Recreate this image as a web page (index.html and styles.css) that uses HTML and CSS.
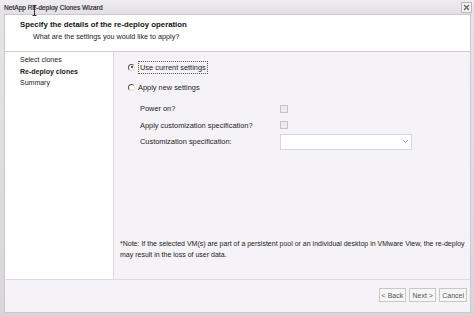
FILE: index.html
```html
<!DOCTYPE html>
<html lang="en">
<head>
    <meta charset="UTF-8">
    <title>NetApp Re-deploy Clones Wizard</title>
    <link rel="stylesheet" href="styles.css">
</head>
<body>
    <div class="window">
        <div class="titlebar">
            <span class="title">NetApp Re-deploy Clones Wizard</span>
            <span class="close">
                <svg width="7" height="7" viewBox="0 0 7 7"><path d="M1 1L6 6M6 1L1 6" stroke="#666" stroke-width="1.4"/></svg>
            </span>
            <!-- mouse pointer left over the title -->
            <svg class="ibeam" width="5" height="11" viewBox="0 0 5 11"><path d="M0.5 0.5H4.5M2.5 0.5V10.5M0.5 10.5H4.5" stroke="#333" fill="none"/></svg>
        </div>
        <div class="frame">
            <header class="header">
                <h1>Specify the details of the re-deploy operation</h1>
                <p>What are the settings you would like to apply?</p>
            </header>
            <div class="main">
                <nav class="steps">
                    <div>Select clones</div>
                    <div class="current">Re-deploy clones</div>
                    <div>Summary</div>
                </nav>
                <section class="content">
                    <label class="radio"><span class="dot checked"></span><span class="focus">Use current settings</span></label>
                    <label class="radio"><span class="dot"></span><span>Apply new settings</span></label>
                    <div class="options">
                        <div class="row"><span class="name">Power on?</span><span class="check"></span></div>
                        <div class="row"><span class="name">Apply customization specification?</span><span class="check"></span></div>
                        <div class="row"><span class="name">Customization specification:</span>
                            <span class="combo"><span class="arrow">
                                <svg width="7" height="5" viewBox="0 0 7 5"><path d="M1 1L3.5 3.5L6 1" stroke="#999" fill="none"/></svg>
                            </span></span>
                        </div>
                    </div>
                    <p class="note">*Note: If the selected VM(s) are part of a persistent pool or an individual desktop in VMware View, the re-deploy may result in the loss of user data.</p>
                </section>
            </div>
            <footer class="footer">
                <button>&lt; Back</button>
                <button>Next &gt;</button>
                <button>Cancel</button>
            </footer>
        </div>
    </div>
</body>
</html>
```
FILE: styles.css
```css
body {
    margin: 0;
    background-color: #dcdadf;
    font-family: 'Liberation Sans', Arial, sans-serif;
    font-size: 7px;
    color: #222;
}
.window {
    width: 474px;
    height: 316px;
    display: flex;
    flex-direction: column;
    background: linear-gradient(#e6e4e8, #d8d6da);
}
.titlebar {
    position: relative;
    height: 14px;
    display: flex;
    align-items: center;
    justify-content: space-between;
    padding: 0 2px 0 4px;
    background: linear-gradient(#efedf1, #e2e0e5);
}
.title {
    font-size: 6.6px;
    color: #2e2e2e;
    -webkit-text-stroke: 0.2px #2e2e2e;
}
.close {
    display: flex;
    align-items: center;
    justify-content: center;
    width: 9px;
    height: 9px;
    border: 1px solid #b8b8b8;
    background: #f4f4f4;
}
.ibeam {
    position: absolute;
    left: 32px;
    top: 5px;
}
.frame {
    flex: 1;
    margin: 0 3px 3px 4px;
    border: 1px solid #cac8cc;
    display: flex;
    flex-direction: column;
    background-color: #f5f3f7;
}
.header {
    height: 37px;
    background-color: white;
    border-bottom: 1px solid #cfcdd1;
    padding: 5px 0 0 15px;
    box-sizing: border-box;
}
.header h1 {
    margin: 0;
    font-size: 7.8px;
    font-weight: 700;
    color: #111;
}
.header p {
    margin: 3px 0 0 13px;
    font-size: 7.2px;
}
.main {
    flex: 1;
    display: flex;
    border-bottom: 1px solid #dddbe0;
}
.steps {
    width: 109px;
    background-color: white;
    border-right: 1px solid #d8d6da;
    padding: 2px 0 0 15px;
    box-sizing: border-box;
    line-height: 11.5px;
}
.steps .current {
    font-weight: 700;
}
.content {
    flex: 1;
    display: flex;
    flex-direction: column;
    padding: 9px 0 0 14px;
    font-size: 7.4px;
}
.radio {
    display: flex;
    align-items: center;
    gap: 3px;
    height: 12px;
    margin-bottom: 8px;
}
.dot {
    width: 5px;
    height: 5px;
    border-radius: 50%;
    border: 1px solid #777;
    border-color: #555 #ddd #ddd #555;
    background: white;
    position: relative;
}
.dot.checked::after {
    content: "";
    position: absolute;
    left: 1.5px;
    top: 1.5px;
    width: 2px;
    height: 2px;
    background: #222;
    border-radius: 50%;
}
.focus {
    border: 1px dotted #555;
    padding: 1px 1px;
}
.options {
    padding: 1px 0 0 12px;
}
.row {
    display: flex;
    align-items: center;
    height: 13px;
    margin-bottom: 3.5px;
}
.name {
    width: 140px;
}
.check {
    width: 6px;
    height: 6px;
    border: 1px solid #c4c4c4;
    background: #ebebeb;
}
.combo {
    width: 130px;
    height: 14px;
    border: 1px solid #d8d6da;
    background: white;
    display: flex;
    justify-content: flex-end;
    align-items: center;
}
.arrow {
    width: 11px;
    display: flex;
    justify-content: center;
}
.note {
    margin: auto 0 19px -8px;
    line-height: 10.5px;
    padding-right: 4px;
    font-size: 7px;
}
.footer {
    height: 30px;
    display: flex;
    align-items: center;
    justify-content: flex-end;
    gap: 3px;
    padding: 0 3px 2px 0;
}
.footer button {
    font-family: inherit;
    font-size: 7px;
    color: #555;
    background: #f6f6f6;
    border: 1px solid #c8c8c8;
    height: 14px;
    padding: 0 2px;
    min-width: 27px;
}
```
